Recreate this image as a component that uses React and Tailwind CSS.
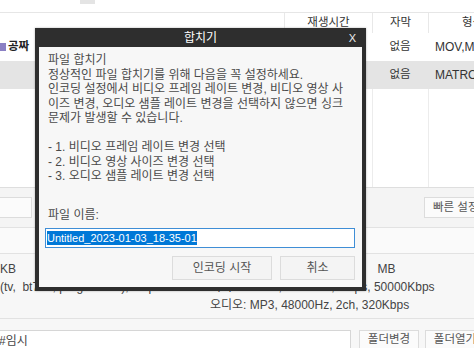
import React from 'react';

const bodyLines = [
    "파일 합치기",
    "정상적인 파일 합치기를 위해 다음을 꼭 설정하세요.",
    "인코딩 설정에서 비디오 프레임 레이트 변경, 비디오 영상 사",
    "이즈 변경, 오디오 샘플 레이트 변경을 선택하지 않으면 싱크",
    "문제가 발생할 수 있습니다.",
    "",
    "- 1. 비디오 프레임 레이트 변경 선택",
    "- 2. 비디오 영상 사이즈 변경 선택",
    "- 3. 오디오 샘플 레이트 변경 선택",
];

const Row = ({ children, grey }) => (
    <div className={`flex h-[28px] items-center ${grey ? 'bg-[#e4e4e4]' : ''}`}>
        {children}
    </div>
);

const App = () => {
    return (
        <div className="relative w-[474px] h-[348px] overflow-hidden bg-white text-[#333] font-['Liberation_Sans','Noto_Sans_CJK_KR',sans-serif] text-[12px]">
            {/* Background app */}
            <div className="flex flex-col h-full">
                {/* Top strip */}
                <div className="h-[13px] shrink-0 border-b border-[#e6e6e6] flex">
                    <div className="ml-[80px] w-[15px] h-[4px] bg-[#e4e4e4]" />
                </div>

                {/* File table */}
                <div className="flex-1 flex flex-col">
                    <div className="flex h-[20px] items-center text-[11.5px]">
                        <div className="w-[284px] shrink-0" />
                        <div className="w-[88px] shrink-0 border-l border-[#e8e8e8] h-full flex items-center justify-center">재생시간</div>
                        <div className="w-[56px] shrink-0 border-l border-[#e8e8e8] h-full flex items-center justify-center">자막</div>
                        <div className="flex-1 min-w-0 overflow-hidden whitespace-nowrap border-l border-[#e8e8e8] h-full pl-[33px] flex items-center">형식</div>
                    </div>
                    <Row>
                        <div className="w-[284px] shrink-0 flex items-center gap-[2px]">
                            <div className="w-[6px] h-[8px] bg-[#8b80c4]" />
                            <span className="font-bold text-[#222] text-[11.5px]">공짜</span>
                        </div>
                        <div className="w-[88px] shrink-0" />
                        <div className="w-[56px] shrink-0 text-center text-[11.5px]">없음</div>
                        <div className="flex-1 min-w-0 overflow-hidden pl-[7px] whitespace-nowrap">MOV,MP4,M4A</div>
                    </Row>
                    <Row grey>
                        <div className="w-[284px] shrink-0" />
                        <div className="w-[88px] shrink-0" />
                        <div className="w-[56px] shrink-0 text-center text-[11.5px]">없음</div>
                        <div className="flex-1 min-w-0 overflow-hidden pl-[7px] whitespace-nowrap">MATROSKA</div>
                    </Row>
                    <div className="flex-1 flex">
                        <div className="w-[372px] shrink-0" />
                        <div className="w-[56px] shrink-0 border-l border-[#ececec]" />
                        <div className="flex-1 border-l border-[#ececec]" />
                    </div>
                </div>

                {/* Button bar */}
                <div className="h-[40px] shrink-0 border-t border-[#dedede] bg-[#f4f4f4] flex items-center justify-between">
                    <div className="-ml-[20px] w-[52px] h-[21px] shrink-0 border border-[#dcdcdc] bg-[#fbfbfb]" />
                    <div className="-mr-[20px] w-[70px] h-[21px] shrink-0 border border-[#dcdcdc] bg-[#fbfbfb] pl-[8px] text-[11.5px] text-[#555] whitespace-nowrap flex items-center">빠른 설정</div>
                </div>

                <div className="h-[26px] shrink-0 border-t border-[#e2e2e2] bg-[#fafafa]" />

                {/* Info */}
                <div className="h-[65px] shrink-0 border-t border-[#e2e2e2] bg-[#f7f7f7] pt-[6px] flex text-[#444] leading-[18px] whitespace-nowrap">
                    <div className="w-[210px] shrink-0 overflow-hidden flex flex-col">
                        <span>KB</span>
                        <span>(tv,&nbsp; bt709, progressive), 30fps</span>
                    </div>
                    <div className="flex flex-col">
                        <span>파일 크기: 1,572,864KB<span className="ml-[44px]">MB</span></span>
                        <span>비디오: H264, 720x480, 30fps, 50000Kbps</span>
                        <span>오디오: MP3, 48000Hz, 2ch, 320Kbps</span>
                    </div>
                </div>

                <div className="h-[12px] shrink-0 border-t border-[#e2e2e2] bg-[#f7f7f7]" />

                {/* Output folder */}
                <div className="h-[18px] shrink-0 bg-[#f7f7f7] flex items-start">
                    <div className="-ml-[10px] w-[361px] h-[20px] shrink-0 border border-[#d6d6d6] bg-white pl-[8px] text-[#444] leading-[20px] whitespace-nowrap">#임시</div>
                    <div className="ml-[8px] w-[60px] h-[20px] shrink-0 border border-[#dcdcdc] bg-[#fbfbfb] text-[11.5px] text-[#555] flex items-center justify-center">폴더변경</div>
                    <div className="ml-[6px] w-[60px] h-[20px] shrink-0 border border-[#dcdcdc] bg-[#fbfbfb] text-[11.5px] text-[#555] flex items-center justify-center">폴더열기</div>
                </div>
            </div>

            {/* Merge dialog */}
            <div className="absolute left-[35px] top-[28px] w-[331px] h-[263px] bg-[#2e2e2e] flex flex-col shadow-[0_0_2px_rgba(0,0,0,0.3)]">
                <div className="h-[19px] relative flex items-center justify-center text-white text-[12px]">
                    합치기
                    <span className="absolute right-[10px] top-[2px] text-[11px] text-[#eee]">X</span>
                </div>
                <div className="flex-1 mx-[4px] mb-[4px] bg-[#f7f7f7] flex flex-col text-[12px] text-[#4a4a4a]">
                    <div className="pt-[6px] pl-[9px] flex flex-col leading-[14.5px] whitespace-nowrap">
                        {bodyLines.map((line, i) => (
                            <span key={i} className="h-[14.5px]">{line}</span>
                        ))}
                    </div>
                    <div className="mt-[24px] pl-[9px] leading-[14.5px]">파일 이름:</div>
                    <div className="mt-[6px] ml-[6px] w-[310px] h-[20px] border border-[#3f8ed6] bg-white flex items-center pl-[1px]">
                        <span className="bg-[#0078d7] text-white text-[11px] leading-[14px] whitespace-nowrap">Untitled_2023-01-03_18-35-01</span>
                    </div>
                    <div className="mt-[8px] mr-[7px] flex justify-end gap-[8px]">
                        <div className="w-[100px] h-[24px] border border-[#dcdcdc] bg-[#f4f4f4] flex items-center justify-center text-[#555]">인코딩 시작</div>
                        <div className="w-[75px] h-[24px] border border-[#dcdcdc] bg-[#f4f4f4] flex items-center justify-center text-[#555]">취소</div>
                    </div>
                </div>
            </div>
        </div>
    );
};

export default App;
